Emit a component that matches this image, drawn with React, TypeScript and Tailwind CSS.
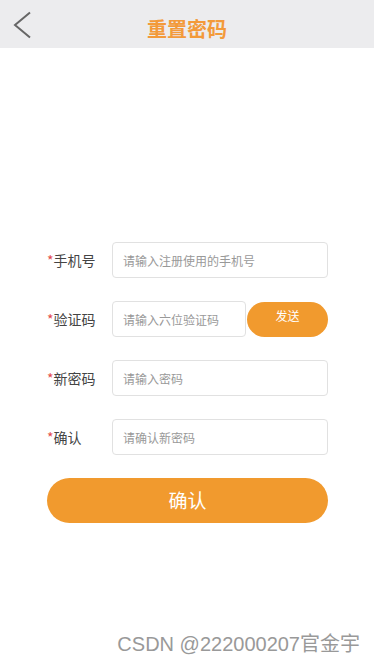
export default function App() {
  const font = { fontFamily: '"Noto Sans CJK SC", "Liberation Sans", sans-serif' };
  const rows = [
    { label: "手机号", placeholder: "请输入注册使用的手机号" },
    { label: "验证码", placeholder: "请输入六位验证码", send: true },
    { label: "新密码", placeholder: "请输入密码" },
    { label: "确认", placeholder: "请确认新密码" },
  ];

  return (
    <div className="relative h-[667px] w-[374px] overflow-hidden bg-white" style={font}>
      {/* Header */}
      <div className="relative flex h-12 items-center justify-center bg-[#ececee]">
        <svg className="absolute left-[11px] top-[11px]" width="22" height="28" viewBox="0 0 22 28" fill="none">
          <path d="M19 1.5L4 14l15 12.5" stroke="#666" strokeWidth="2" />
        </svg>
        <h1 className="mt-[9px] text-[20px] font-bold text-[#f39a3a]">重置密码</h1>
      </div>

      {/* Form */}
      <div className="mt-[194px] flex flex-col gap-[23px] pl-[47px] pr-[46px]">
        {rows.map((r) => (
          <div key={r.label} className="flex h-9 items-center">
            <span className="w-[65px] shrink-0 text-[14px] text-[#444]">
              <span className="text-[#e34b4b]">*</span>
              {r.label}
            </span>
            <input
              placeholder={r.placeholder}
              className={`h-9 rounded-[4px] border border-[#e1e1e1] px-[10px] text-[12px] text-[#333] outline-none placeholder:text-[#999] ${
                r.send ? "w-[134px]" : "flex-1"
              }`}
              style={font}
            />
            {r.send && (
              <button className="ml-px flex h-[35px] flex-1 items-start justify-center rounded-full bg-[#f19a2e] pt-[5px] text-[12px] text-white">
                发送
              </button>
            )}
          </div>
        ))}
        <button className="h-[45px] rounded-full bg-[#f19a2e] text-[19px] text-white">确认</button>
      </div>

      {/* Watermark */}
      <div
        className="absolute bottom-[8px] right-[14px] text-[20px] text-[#999]"
        style={{ fontFamily: '"Liberation Sans", "Noto Sans CJK SC", sans-serif', textShadow: "0 0 2px #fff" }}
      >
        CSDN @222000207官金宇
      </div>
    </div>
  );
}
